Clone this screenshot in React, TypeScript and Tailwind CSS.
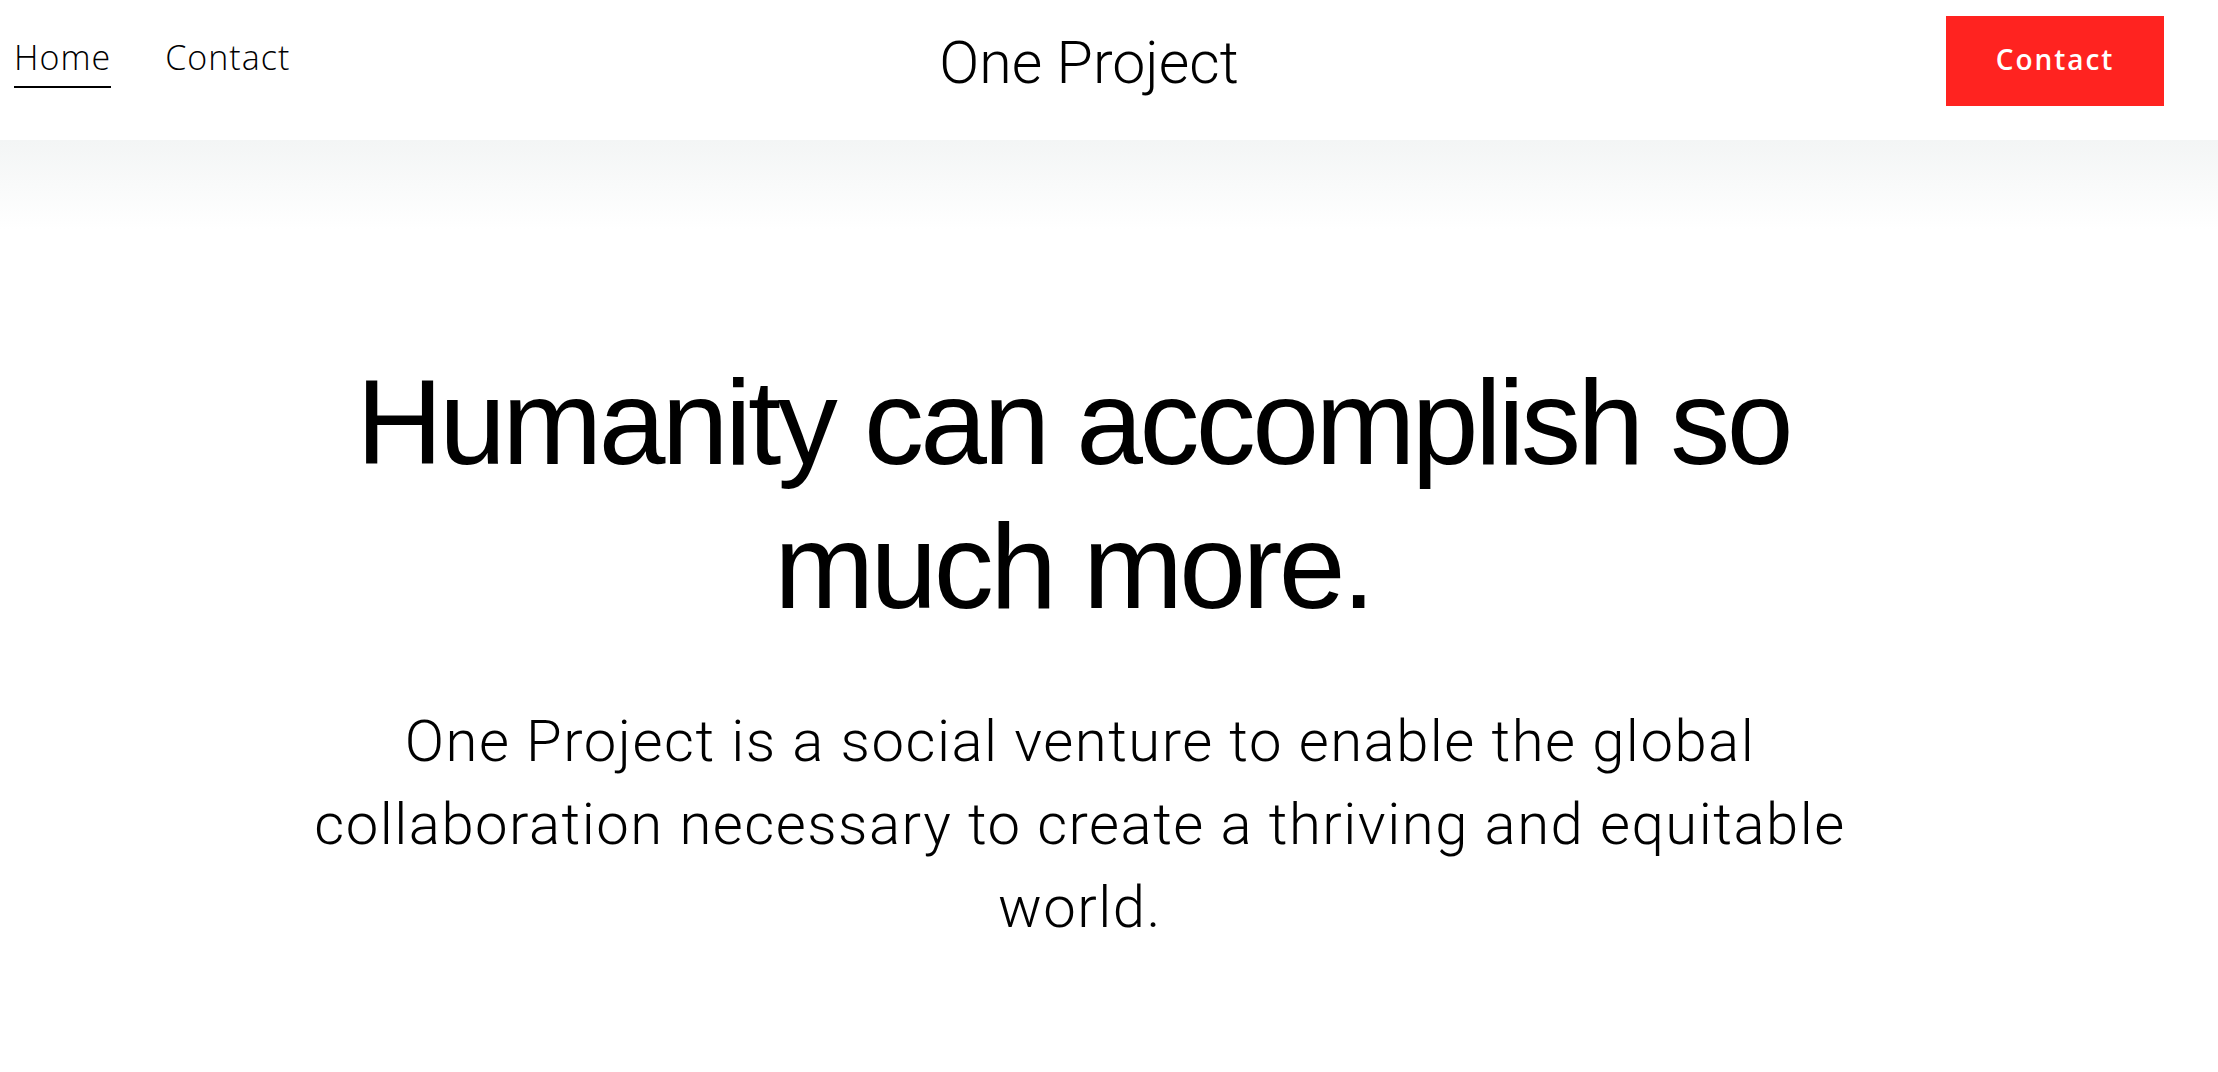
import React from "react";

const navFont = { fontFamily: '"Open Sans", "Noto Sans", sans-serif' };

function Header() {
  return (
    <header className="grid h-[140px] grid-cols-[1fr_auto_1fr] items-start pl-[14px] pr-[54px] bg-white">
      <nav className="mt-[40px] flex items-start gap-[54px] text-[34px] font-light tracking-[0.03em] text-black" style={navFont}>
        <a href="#" className="border-b-2 border-black pb-[12px] leading-none">Home</a>
        <a href="#" className="leading-none">Contact</a>
      </nav>
      <div
        className="mt-[33px] text-[59px] font-light leading-none text-black"
        style={{ fontFamily: 'Roboto, "Liberation Sans", sans-serif' }}
      >
        One Project
      </div>
      <div className="mt-[16px] flex justify-end">
        <a
          href="#"
          className="flex h-[90px] w-[218px] items-center justify-center bg-[#ff2320] pb-[5px] text-[28px] font-semibold tracking-[0.07em] text-white"
          style={navFont}
        >
          Contact
        </a>
      </div>
    </header>
  );
}

export default function App() {
  return (
    <div className="min-h-screen bg-white">
      <Header />
      <div className="h-[90px] bg-gradient-to-b from-[#f3f5f5] to-white" />
      <main className="flex flex-col items-center pr-[58px] pt-[120px]">
        <h1
          className="mr-[14px] max-w-[1560px] text-center text-[120px] font-normal leading-[144px] tracking-[-0.03em] text-black"
          style={{ fontFamily: '"Liberation Sans", Arial, sans-serif' }}
        >
          Humanity can accomplish so much more.
        </h1>
        <p
          className="mt-[62px] max-w-[1620px] text-center text-[58px] font-light leading-[83px] tracking-[0.026em] text-black"
          style={{ fontFamily: 'Roboto, "Liberation Sans", sans-serif' }}
        >
          One Project is a social venture to enable the global collaboration necessary to create a thriving and equitable world.
        </p>
      </main>
    </div>
  );
}
